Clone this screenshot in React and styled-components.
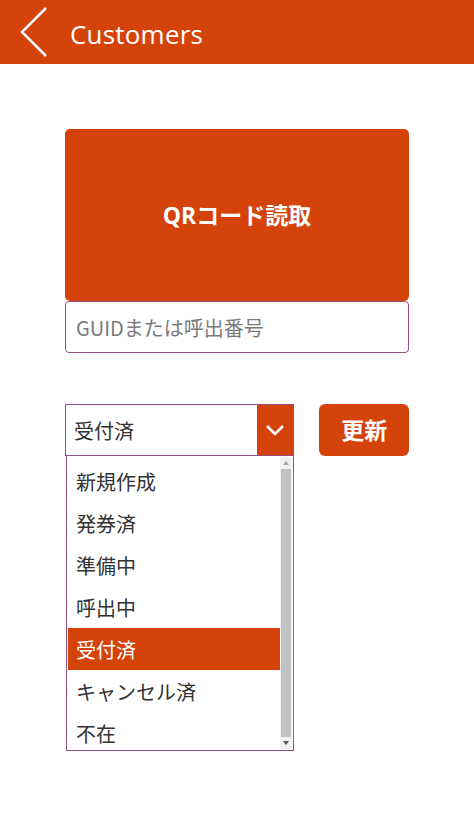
import React from "react";
import styled, { createGlobalStyle } from "styled-components";

const ORANGE = "#D4430A";
const BORDER = "#9B4F7E";

const Global = createGlobalStyle`
  html, body { margin: 0; padding: 0; background: #fff; }
  body { font-family: "Open Sans", "Noto Sans CJK JP", sans-serif; }
  * { box-sizing: border-box; }
`;

const Page = styled.div`
  width: 474px;
  height: 838px;
  display: flex;
  flex-direction: column;
  background: #fff;
`;

const Header = styled.header`
  height: 64px;
  background: ${ORANGE};
  display: flex;
  align-items: center;
  padding-left: 18px;
`;

const BackButton = styled.button`
  width: 32px;
  height: 52px;
  border: none;
  background: transparent;
  padding: 0;
  display: flex;
  align-items: center;
  justify-content: center;
`;

const Title = styled.h1`
  margin: 3px 0 0 20px;
  color: #fff;
  font-family: "Open Sans", "Noto Sans CJK JP", sans-serif;
  font-weight: 400;
  font-size: 26px;
  letter-spacing: 0.2px;
`;

const Content = styled.main`
  display: flex;
  flex-direction: column;
  padding: 65px 65px 0 65px;
`;

const QrButton = styled.button`
  height: 172px;
  width: 344px;
  background: ${ORANGE};
  border: none;
  border-radius: 5px;
  color: #fff;
  font-family: "Open Sans", "Noto Sans CJK JP", sans-serif;
  font-weight: 700;
  font-size: 23px;
  display: flex;
  align-items: center;
  justify-content: center;
  padding: 0 0 2px 0;
`;

const TextInput = styled.input`
  height: 52px;
  width: 344px;
  border: 1px solid ${BORDER};
  border-radius: 4px;
  padding: 0 10px;
  font-family: "Noto Sans CJK JP", sans-serif;
  font-size: 20px;
  color: #333;
  outline: none;
  &::placeholder { color: #7a7a7a; }
`;

const ControlRow = styled.div`
  display: flex;
  align-items: flex-start;
  gap: 25px;
  margin-top: 51px;
`;

const SelectColumn = styled.div`
  width: 230px;
  display: flex;
  flex-direction: column;
`;

const SelectBox = styled.div`
  height: 52px;
  border: 1px solid ${BORDER};
  display: flex;
  align-items: stretch;
`;

const SelectValue = styled.div`
  flex: 1;
  display: flex;
  align-items: center;
  padding-left: 8px;
  font-family: "Noto Sans CJK JP", sans-serif;
  font-size: 20px;
  color: #333;
`;

const ChevronBox = styled.div`
  width: 36px;
  background: ${ORANGE};
  display: flex;
  align-items: center;
  justify-content: center;
`;

const ListBox = styled.div`
  margin-left: 1px;
  height: 295px;
  border: 1px solid ${BORDER};
  border-top: none;
  display: flex;
  padding: 1px;
`;

const Items = styled.ul`
  list-style: none;
  margin: 0;
  padding: 3px 0 0 0;
  flex: 1;
  display: flex;
  flex-direction: column;
`;

const Item = styled.li`
  height: 42px;
  flex: none;
  display: flex;
  align-items: center;
  padding-left: 8px;
  font-family: "Noto Sans CJK JP", sans-serif;
  font-size: 20px;
  color: ${(p) => (p.$selected ? "#fff" : "#333")};
  background: ${(p) => (p.$selected ? ORANGE : "transparent")};
`;

const Scrollbar = styled.div`
  width: 12px;
  display: flex;
  flex-direction: column;
  align-items: center;
  background: #f1f1f1;
  padding: 0 1px;
`;

const ArrowCell = styled.div`
  height: 12px;
  width: 100%;
  display: flex;
  align-items: center;
  justify-content: center;
`;

const Thumb = styled.div`
  flex: 1;
  width: 100%;
  background: #c1c1c1;
`;

const UpdateButton = styled.button`
  width: 90px;
  height: 52px;
  border: none;
  border-radius: 6px;
  background: ${ORANGE};
  color: #fff;
  font-family: "Noto Sans CJK JP", sans-serif;
  font-weight: 700;
  font-size: 23px;
  display: flex;
  align-items: center;
  justify-content: center;
  padding: 0 0 2px 0;
`;

const statuses = ["新規作成", "発券済", "準備中", "呼出中", "受付済", "キャンセル済", "不在"];

export default function App() {
  return (
    <Page>
      <Global />
      <Header>
        <BackButton aria-label="back">
          <svg width="30" height="52" viewBox="0 0 30 52">
            <polyline points="27,2 3,26 27,50" fill="none" stroke="#fff" strokeWidth="2.5" />
          </svg>
        </BackButton>
        <Title>Customers</Title>
      </Header>
      <Content>
        <QrButton>QRコード読取</QrButton>
        <TextInput placeholder="GUIDまたは呼出番号" />
        <ControlRow>
          <SelectColumn>
            <SelectBox>
              <SelectValue>受付済</SelectValue>
              <ChevronBox>
                <svg width="20" height="12" viewBox="0 0 20 12">
                  <polyline points="2,2 10,10 18,2" fill="none" stroke="#fff" strokeWidth="2.6" />
                </svg>
              </ChevronBox>
            </SelectBox>
            <ListBox>
              <Items>
                {statuses.map((s) => (
                  <Item key={s} $selected={s === "受付済"}>{s}</Item>
                ))}
              </Items>
              <Scrollbar>
                <ArrowCell>
                  <svg width="6" height="4" viewBox="0 0 6 4"><polygon points="0,4 3,0 6,4" fill="#a3a3a3" /></svg>
                </ArrowCell>
                <Thumb />
                <ArrowCell>
                  <svg width="6" height="4" viewBox="0 0 6 4"><polygon points="0,0 6,0 3,4" fill="#505050" /></svg>
                </ArrowCell>
              </Scrollbar>
            </ListBox>
          </SelectColumn>
          <UpdateButton>更新</UpdateButton>
        </ControlRow>
      </Content>
    </Page>
  );
}
